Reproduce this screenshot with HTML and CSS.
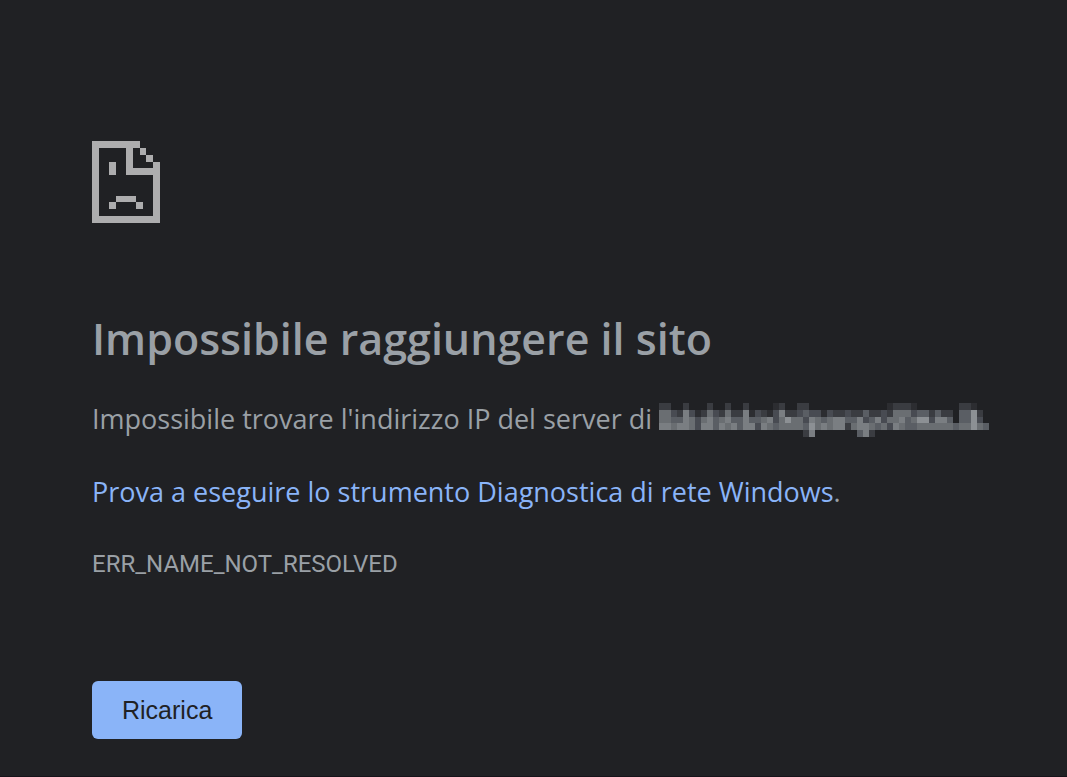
FILE: index.html
```html
<!DOCTYPE html>
<html lang="it">
<head>
    <meta charset="UTF-8">
    <meta name="viewport" content="width=device-width, initial-scale=1">
    <title>Impossibile raggiungere il sito</title>
    <link rel="stylesheet" href="styles.css">
</head>
<body>
    <main class="error-page">
        <svg class="icon" viewBox="0 0 20 24" shape-rendering="crispEdges" aria-hidden="true">
            <path d="M0 0h14v2h-2v6h6V6h2v18H0zM2 2v20h16V10H10V2z" fill-rule="evenodd"/>
            <path d="M14 2h2v2h-2zM16 4h2v2h-2z"/>
            <path d="M5 6h2v4H5zM7 16h6v2H7zM5 18h2v2H5zM13 18h2v2h-2z"/>
        </svg>

        <h1>Impossibile raggiungere il sito</h1>

        <p class="summary">Impossibile trovare l'indirizzo IP del server di <svg class="hidden-host" viewBox="0 0 55 5" preserveAspectRatio="none" shape-rendering="crispEdges" aria-hidden="true"></svg></p>
        <p class="suggestion"><a href="#">Prova a eseguire lo strumento Diagnostica di rete Windows</a>.</p>
        <p class="error-code">ERR_NAME_NOT_RESOLVED</p>

        <button class="reload" type="button">Ricarica</button>
    </main>
    <script src="script.js"></script>
</body>
</html>
```
FILE: styles.css
```css
* {
    box-sizing: border-box;
    margin: 0;
    padding: 0;
}

body {
    min-height: 100vh;
    background: #202124;
    border-bottom: 1px solid #17131a;
    color: #9aa0a6;
    font-family: "Open Sans", "Noto Sans", sans-serif;
    font-size: 27px;
    line-height: 37px;
}

.error-page {
    padding: 141px 60px 36px 92px;
}

.icon {
    display: block;
    width: 68px;
    height: 82px;
    margin-bottom: 86px;
    fill: #adadae;
}

h1 {
    margin-bottom: 31px;
    font-size: 43px;
    font-weight: 600;
    line-height: 60px;
}

p {
    margin-bottom: 36px;
}

.hidden-host {
    width: 330px;
    height: 34px;
    vertical-align: -8px;
}

a {
    color: #8ab4f8;
    text-decoration: none;
}

.error-code {
    font-family: Roboto, sans-serif;
    font-size: 24px;
}

.reload {
    display: block;
    margin-top: 98px;
    padding: 0 30px;
    border: 0;
    border-radius: 6px;
    background: #8ab4f8;
    color: #202124;
    font-family: "Liberation Sans", Arial, sans-serif;
    font-size: 25px;
    line-height: 58px;
    cursor: pointer;
}
```
FILE: script.js
```js
// brightness of each block, 0 = background
const blocks = [
    "2200200020020020000120022000000000000012221000000022100",
    "5532631253252261321362234331322322422325553442422044720",
    "5544653564564464456357553654566446346355645773664044730",
    "6656653664656466365455554756566256654536544555555455754",
    "0000000000000000000000002600000004620000000000000000000"
];
const shades = ["", "#2c2d31", "#3a3c41", "#484b52", "#5a5e64", "#6a6e72", "#7a7e82", "#8c9094"];
const host = document.querySelector('.hidden-host');

blocks.forEach((row, y) => {
    [...row].forEach((level, x) => {
        if (level === "0") return;
        const rect = document.createElementNS("http://www.w3.org/2000/svg", "rect");
        rect.setAttribute("x", x);
        rect.setAttribute("y", y);
        rect.setAttribute("width", 1);
        rect.setAttribute("height", 1);
        rect.setAttribute("fill", shades[level]);
        host.appendChild(rect);
    });
});
```
